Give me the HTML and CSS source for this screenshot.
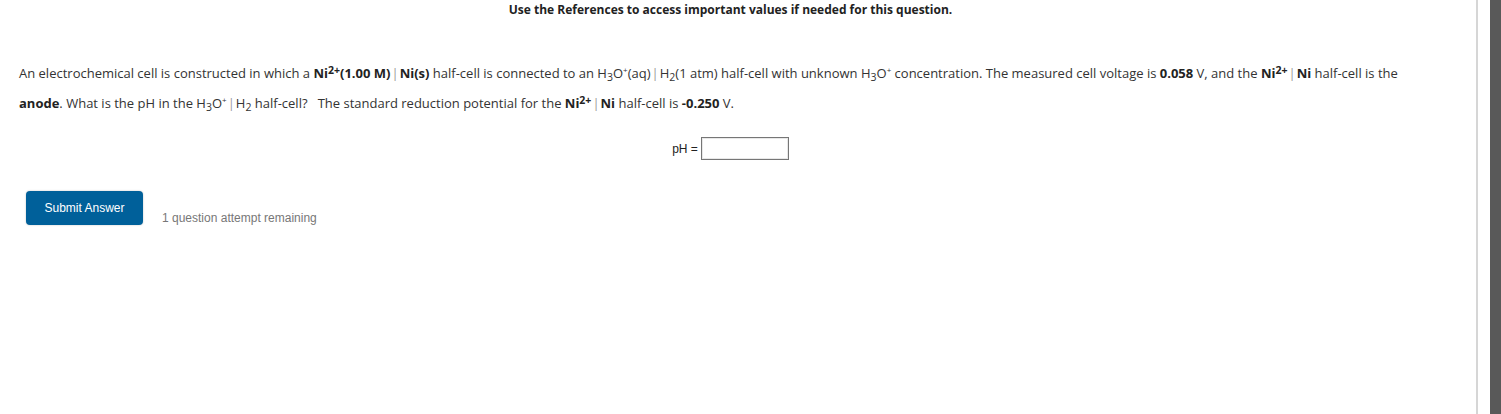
FILE: index.html
```html
<!DOCTYPE html>
<html>
<head>
<meta charset="utf-8">
<link rel="stylesheet" href="styles.css">
</head>
<body>
<div class="frame">
  <div class="page">
    <div class="refs">Use the References to access important values if needed for this question.</div>
    <div class="question">
      <p class="text">An electrochemical cell is constructed in which a <b>Ni<sup>2+</sup>(1.00 M)</b><span class="bar">|</span><b>Ni(s)</b> half-cell is connected to an H<sub>3</sub>O<sup class="plus">+</sup>(aq)<span class="bar">|</span>H<sub>2</sub>(1 atm) half-cell with unknown H<sub>3</sub>O<sup class="plus">+</sup> concentration. The measured cell voltage is <b>0.058</b> V, and the <b>Ni<sup>2+</sup></b><span class="bar">|</span><b>Ni</b> half-cell is the <b>anode</b>. What is the pH in the H<sub>3</sub>O<sup class="plus">+</sup><span class="bar">|</span>H<sub>2</sub> half-cell?&nbsp;&nbsp; The standard reduction potential for the <b>Ni<sup>2+</sup></b><span class="bar">|</span><b>Ni</b> half-cell is <b>-0.250</b> V.</p>
      <div class="answer">
        <span class="label">pH =</span>
        <span class="input"></span>
      </div>
    </div>
    <div class="actions">
      <button class="submit">Submit Answer</button>
      <span class="remaining">1 question attempt remaining</span>
    </div>
  </div>
  <div class="gutter"></div>
  <div class="scrollbar"></div>
</div>
</body>
</html>
```
FILE: styles.css
```css
html, body {
  margin: 0;
  padding: 0;
  background: #fff;
}
.frame {
  display: flex;
  height: 414px;
  overflow: hidden;
}
.page {
  flex: 1;
  padding: 0 0 0 19px;
  font-family: "Open Sans", sans-serif;
  color: #333;
}
.refs {
  text-align: center;
  font-weight: bold;
  font-size: 12px;
  color: #222;
  padding-top: 1px;
  width: 1423px;
}
.question {
  padding-top: 40px;
}
.text {
  margin: 0;
  font-size: 13px;
  line-height: 30px;
  color: #333;
  width: 1400px;
}
.text b {
  color: #222;
}
.text sup {
  font-size: 10.5px;
  line-height: 0;
  vertical-align: 4px;
  font-weight: bold;
}
.text sup.plus {
  font-weight: normal;
  font-size: 8px;
  vertical-align: 5px;
}
.text sub {
  font-size: 10.5px;
  line-height: 0;
  vertical-align: -3px;
}
.bar {
  color: #999;
  padding: 0 1px;
}
.answer {
  display: flex;
  justify-content: center;
  align-items: center;
  gap: 3px;
  width: 1413px;
  margin-top: 19px;
}
.label {
  font-family: "Liberation Sans", Arial, sans-serif;
  font-size: 12px;
  color: #222;
  margin-left: 10px;
}
.input {
  display: block;
  width: 86px;
  height: 21px;
  border: 1px solid #767676;
  box-shadow: inset 0 0 0 1px #e8e8e8;
}
.actions {
  display: flex;
  align-items: flex-start;
  margin-top: 31px;
  margin-left: 7px;
}
.submit {
  font-family: "Liberation Sans", Arial, sans-serif;
  font-size: 12px;
  color: #fff;
  background: #00609a;
  border: none;
  border-radius: 4px;
  width: 117px;
  height: 34px;
  padding: 0;
  box-shadow: 0 0 2px rgba(0,0,0,0.25);
}
.remaining {
  font-family: "Liberation Sans", Arial, sans-serif;
  font-size: 12px;
  color: #777;
  margin-left: 19px;
  margin-top: 20px;
}
.gutter {
  width: 12px;
  border-left: 2px solid #d6d6d6;
  background: #fff;
}
.scrollbar {
  width: 11px;
  background: #595959;
}
```
